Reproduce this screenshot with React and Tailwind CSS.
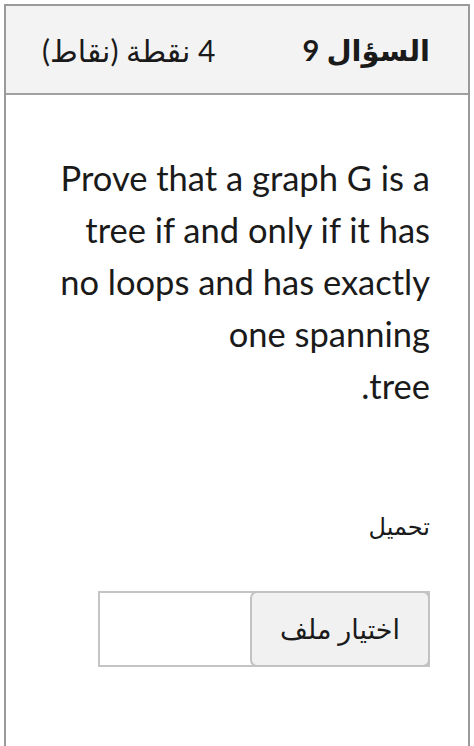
export default function App() {
  return (
    <div className="min-h-[746px] bg-white pl-[4px] pr-[4px] pt-[4px] font-['Lato','DejaVu_Sans',sans-serif] text-[#1a1a1a]" dir="rtl">
      <div className="min-h-[760px] border-2 border-[#9a9a9a] bg-white">
        <div className="flex h-[89px] items-center justify-between border-b-2 border-[#a0a0a0] bg-[#f3f3f3] pl-[36px] pr-[38px]">
          <div className="text-[29px] font-bold leading-none">السؤال 9</div>
          <div className="text-[30px] leading-none">4 نقطة (نقاط)</div>
        </div>
        <div className="pl-[36px] pr-[38px] pt-[57px]">
          <p className="ml-[12px] text-right text-[34.5px] leading-[52px]">
            Prove that a graph G is a tree if and only if it has no loops and has exactly one spanning
            <br />
            tree.
          </p>
          <div className="mt-[102px] text-[24px] leading-none">تحميل</div>
          <div className="mt-[53px] flex h-[76px] w-[332px] items-stretch border-2 border-[#c4c4c4] bg-white">
            <div className="flex w-[180px] items-center justify-center rounded-[7px] border-2 border-[#c4c2c0] bg-[#f1f1f1] text-[27px] -my-[2px] -mr-[2px]">
              اختيار ملف
            </div>
          </div>
        </div>
      </div>
    </div>
  );
}
